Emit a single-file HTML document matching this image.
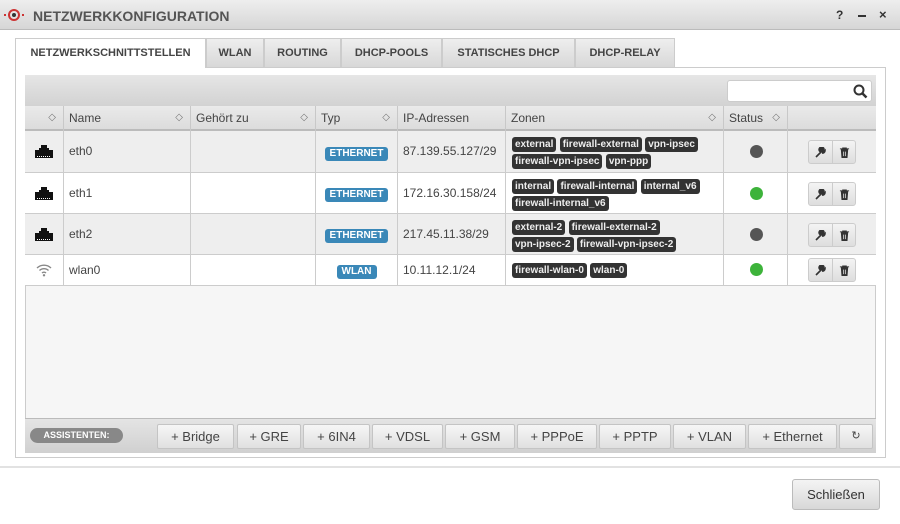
<!DOCTYPE html>
<html><head><meta charset="utf-8"><style>
*{box-sizing:border-box;margin:0;padding:0}
body{width:900px;height:524px;background:#fff;font-family:"Liberation Sans",sans-serif;position:relative;overflow:hidden;color:#333}
.abs{position:absolute}
.title{left:0;top:0;width:900px;height:30px;background:linear-gradient(#eee,#d6d6d6);border-bottom:1px solid #bbb}
.title span{position:absolute;left:33px;top:8px;font-weight:bold;font-size:14px;color:#555}
.tab{position:absolute;top:38px;height:29px;background:linear-gradient(#eee,#d8d8d8);border:1px solid #ccc;border-bottom:none;font-weight:bold;font-size:11px;color:#444;text-align:center;line-height:28px}
.tab.act{background:#fff;height:30px;z-index:2}
.panel{left:15px;top:67px;width:871px;height:391px;border:1px solid #ccc;background:#fff}
.grid{left:25px;top:75px;width:851px;height:378px;background:#f6f6f6;border:1px solid #ccc}
.tb{left:25px;top:75px;width:851px;height:31px;background:linear-gradient(#e6e6e6,#d2d2d2)}
.hdr{left:25px;top:106px;width:851px;height:25px;background:linear-gradient(#eaeaea,#dcdcdc);border-bottom:2px solid #bbb}
.hc{position:absolute;top:0;height:25px;border-right:1px solid #c8c8c8;font-size:12px;line-height:24px;padding-left:5px;color:#444}
.hc i{position:absolute;right:7px;top:0;font-style:normal;font-size:10px;color:#777}
.row{position:absolute;left:25px;width:851px;border-bottom:1px solid #ccc}
.c{position:absolute;top:0;bottom:0;border-right:1px solid #ccc;font-size:12px;color:#444}
.badge{display:inline-block;background:#3a88b8;color:#fff;font-weight:bold;font-size:10px;border-radius:3px;padding:1px 5px;line-height:12px}
.z{display:inline-block;background:#333;color:#eee;font-weight:bold;font-size:10px;border-radius:3px;padding:0 3px;line-height:15px}
.dot{position:absolute;left:26px;width:13px;height:13px;border-radius:50%}
.act2{position:absolute;left:20px;width:48px;height:24px;border:1px solid #ccc;border-radius:3px;background:linear-gradient(#f4f4f4,#dedede)}
.act2:after{content:"";position:absolute;left:23px;top:0;bottom:0;border-left:1px solid #ccc}
.act2 svg{position:absolute;top:6px}
.eth{position:absolute;left:10px;width:18px;height:13px}
.bt{left:25px;top:418px;width:851px;height:35px;background:linear-gradient(#e4e4e4,#d0d0d0);border-top:1px solid #bbb}
.b{position:absolute;top:424px;height:25px;border:1px solid #c4c4c4;border-radius:2px;background:linear-gradient(#f6f6f6,#e0e0e0);font-size:13px;color:#444;text-align:center;line-height:23px}
</style></head><body>
<div class="abs title"><span>NETZWERKKONFIGURATION</span>
<div class="abs" style="left:8px;top:9px;width:12px;height:12px;border:2px solid #c33;border-radius:50%"></div>
<div class="abs" style="left:12px;top:13px;width:4px;height:4px;background:#333;border-radius:50%"></div>
<div class="abs" style="left:4px;top:14px;width:2px;height:2px;background:#c33"></div>
<div class="abs" style="left:22px;top:14px;width:2px;height:2px;background:#c33"></div>
<div class="abs" style="left:836px;top:8px;font-weight:bold;font-size:12px;color:#333">?</div>
<div class="abs" style="left:858px;top:15px;width:8px;height:2px;background:#333"></div>
<div class="abs" style="left:879px;top:7px;font-weight:bold;font-size:13px;color:#333">×</div>
</div>
<div class="abs panel"></div>
<div class="tab act" style="left:15px;width:191px">NETZWERKSCHNITTSTELLEN</div>
<div class="tab" style="left:206px;width:58px">WLAN</div>
<div class="tab" style="left:264px;width:77px">ROUTING</div>
<div class="tab" style="left:341px;width:101px">DHCP-POOLS</div>
<div class="tab" style="left:442px;width:133px">STATISCHES DHCP</div>
<div class="tab" style="left:575px;width:100px">DHCP-RELAY</div>
<div class="abs grid"></div>
<div class="abs tb"></div>
<div class="abs" style="left:727px;top:80px;width:145px;height:22px;background:#fff;border:1px solid #ccc;border-radius:3px">
<svg style="position:absolute;right:3px;top:3px" width="15" height="15" viewBox="0 0 15 15"><circle cx="6" cy="6" r="4.5" fill="none" stroke="#333" stroke-width="2"/><path d="M9.5 9.5L13.5 13.5" stroke="#333" stroke-width="2.5"/></svg></div>
<div class="abs hdr">
<div class="hc" style="left:0;width:39px"><i>◇</i></div>
<div class="hc" style="left:39px;width:127px">Name<i>◇</i></div>
<div class="hc" style="left:166px;width:125px">Gehört zu<i>◇</i></div>
<div class="hc" style="left:291px;width:82px">Typ<i>◇</i></div>
<div class="hc" style="left:373px;width:108px">IP-Adressen</div>
<div class="hc" style="left:481px;width:218px">Zonen<i>◇</i></div>
<div class="hc" style="left:699px;width:64px">Status<i>◇</i></div>
<div class="hc" style="left:763px;width:88px;border:none"></div>
</div>

<svg width="0" height="0" style="position:absolute"><defs>
<symbol id="e" viewBox="0 0 18 13"><path d="M6 0h6v3h2v2h4v8H0V5h4V3h2z" fill="#111"/><path d="M2 11.5h14" stroke="#fff" stroke-width="1" stroke-dasharray="1 1"/></symbol>
<symbol id="w" viewBox="0 0 12 12"><path d="M2 7l4 4 4-4M0 4.5a8.5 8.5 0 0 1 12 0M2 6.5" fill="none" stroke="#333" stroke-width="1.5"/></symbol>
<symbol id="t" viewBox="0 0 12 12"><path d="M1 2h10M4 2V1h4v1M2.5 3h7l-.7 8.5H3.2z" fill="#333" stroke="#333" stroke-width="1"/><path d="M5 5v5M7 5v5" stroke="#ccc"/></symbol>
</defs></svg>

<div class="row" style="top:131px;height:42px;background:#eee">
<div class="c" style="left:0;width:39px"><svg class="eth" style="top:14px"><use href="#e"/></svg></div>
<div class="c" style="left:39px;width:127px;padding:13px 0 0 5px">eth0</div>
<div class="c" style="left:166px;width:125px"></div>
<div class="c" style="left:291px;width:82px;text-align:center;padding-top:14px;line-height:14px"><span class="badge">ETHERNET</span></div>
<div class="c" style="left:373px;width:108px;padding:13px 0 0 5px">87.139.55.127/29</div>
<div class="c" style="left:481px;width:218px;padding:4px 0 0 6px;line-height:17px"><span class="z">external</span> <span class="z">firewall-external</span> <span class="z">vpn-ipsec</span><br><span class="z">firewall-vpn-ipsec</span> <span class="z">vpn-ppp</span></div>
<div class="c" style="left:699px;width:64px"><div class="dot" style="top:14px;background:#555"></div></div>
<div class="c" style="left:763px;width:88px;border:none"><div class="act2" style="top:9px"><svg style="left:6px" width="11" height="11" viewBox="0 0 11 11"><path d="M1 10l5-5M6 5a2.5 2.5 0 1 1 3-3L8 3.5 9 4.5 10 3.5A2.5 2.5 0 0 1 7 6" fill="#333" stroke="#333" stroke-width="1.6"/></svg><svg style="left:30px" width="11" height="11"><use href="#t"/></svg></div></div>
</div>
<div class="row" style="top:173px;height:41px;background:#fff">
<div class="c" style="left:0;width:39px"><svg class="eth" style="top:14px"><use href="#e"/></svg></div>
<div class="c" style="left:39px;width:127px;padding:13px 0 0 5px">eth1</div>
<div class="c" style="left:166px;width:125px"></div>
<div class="c" style="left:291px;width:82px;text-align:center;padding-top:13px;line-height:14px"><span class="badge">ETHERNET</span></div>
<div class="c" style="left:373px;width:108px;padding:13px 0 0 5px">172.16.30.158/24</div>
<div class="c" style="left:481px;width:218px;padding:4px 0 0 6px;line-height:17px"><span class="z">internal</span> <span class="z">firewall-internal</span> <span class="z">internal_v6</span><br><span class="z">firewall-internal_v6</span></div>
<div class="c" style="left:699px;width:64px"><div class="dot" style="top:14px;background:#3db33a"></div></div>
<div class="c" style="left:763px;width:88px;border:none"><div class="act2" style="top:9px"><svg style="left:6px" width="11" height="11" viewBox="0 0 11 11"><path d="M1 10l5-5M6 5a2.5 2.5 0 1 1 3-3L8 3.5 9 4.5 10 3.5A2.5 2.5 0 0 1 7 6" fill="#333" stroke="#333" stroke-width="1.6"/></svg><svg style="left:30px" width="11" height="11"><use href="#t"/></svg></div></div>
</div>
<div class="row" style="top:214px;height:41px;background:#eee">
<div class="c" style="left:0;width:39px"><svg class="eth" style="top:14px"><use href="#e"/></svg></div>
<div class="c" style="left:39px;width:127px;padding:13px 0 0 5px">eth2</div>
<div class="c" style="left:166px;width:125px"></div>
<div class="c" style="left:291px;width:82px;text-align:center;padding-top:13px;line-height:14px"><span class="badge">ETHERNET</span></div>
<div class="c" style="left:373px;width:108px;padding:13px 0 0 5px">217.45.11.38/29</div>
<div class="c" style="left:481px;width:218px;padding:4px 0 0 6px;line-height:17px"><span class="z">external-2</span> <span class="z">firewall-external-2</span><br><span class="z">vpn-ipsec-2</span> <span class="z">firewall-vpn-ipsec-2</span></div>
<div class="c" style="left:699px;width:64px"><div class="dot" style="top:14px;background:#555"></div></div>
<div class="c" style="left:763px;width:88px;border:none"><div class="act2" style="top:9px"><svg style="left:6px" width="11" height="11" viewBox="0 0 11 11"><path d="M1 10l5-5M6 5a2.5 2.5 0 1 1 3-3L8 3.5 9 4.5 10 3.5A2.5 2.5 0 0 1 7 6" fill="#333" stroke="#333" stroke-width="1.6"/></svg><svg style="left:30px" width="11" height="11"><use href="#t"/></svg></div></div>
</div>
<div class="row" style="top:255px;height:31px;background:#fff">
<div class="c" style="left:0;width:39px"><svg style="position:absolute;left:11px;top:8px" width="16" height="14" viewBox="0 0 16 14"><path d="M1 5a10 10 0 0 1 14 0M3.5 7.5a6.5 6.5 0 0 1 9 0M6 10a3 3 0 0 1 4 0" fill="none" stroke="#888" stroke-width="1.4"/><circle cx="8" cy="12.3" r="1.2" fill="#888"/></svg></div>
<div class="c" style="left:39px;width:127px;padding:8px 0 0 5px">wlan0</div>
<div class="c" style="left:166px;width:125px"></div>
<div class="c" style="left:291px;width:82px;text-align:center;padding-top:8px;line-height:14px"><span class="badge">WLAN</span></div>
<div class="c" style="left:373px;width:108px;padding:8px 0 0 5px">10.11.12.1/24</div>
<div class="c" style="left:481px;width:218px;padding:6px 0 0 6px;line-height:17px"><span class="z">firewall-wlan-0</span> <span class="z">wlan-0</span></div>
<div class="c" style="left:699px;width:64px"><div class="dot" style="top:8px;background:#3db33a"></div></div>
<div class="c" style="left:763px;width:88px;border:none"><div class="act2" style="top:3px"><svg style="left:6px" width="11" height="11" viewBox="0 0 11 11"><path d="M1 10l5-5M6 5a2.5 2.5 0 1 1 3-3L8 3.5 9 4.5 10 3.5A2.5 2.5 0 0 1 7 6" fill="#333" stroke="#333" stroke-width="1.6"/></svg><svg style="left:30px" width="11" height="11"><use href="#t"/></svg></div></div>
</div>

<div class="abs bt"></div>
<div class="abs" style="left:30px;top:428px;width:93px;height:15px;border-radius:8px;background:#888;color:#fff;font-weight:bold;font-size:9px;text-align:center;line-height:15px">ASSISTENTEN:</div>
<div class="b" style="left:157px;width:77px">+ Bridge</div>
<div class="b" style="left:237px;width:64px">+ GRE</div>
<div class="b" style="left:303px;width:67px">+ 6IN4</div>
<div class="b" style="left:372px;width:71px">+ VDSL</div>
<div class="b" style="left:445px;width:70px">+ GSM</div>
<div class="b" style="left:517px;width:80px">+ PPPoE</div>
<div class="b" style="left:599px;width:72px">+ PPTP</div>
<div class="b" style="left:673px;width:73px">+ VLAN</div>
<div class="b" style="left:748px;width:89px">+ Ethernet</div>
<div class="b" style="left:839px;width:34px;font-size:11px">↻</div>
<div class="abs" style="left:0;top:466px;width:900px;height:2px;background:#e2e2e2"></div>
<div class="abs" style="left:792px;top:479px;width:88px;height:31px;border:1px solid #bbb;border-radius:3px;background:linear-gradient(#f4f4f4,#d8d8d8);font-size:13px;text-align:center;line-height:29px;color:#333">Schließen</div>
</body></html>
